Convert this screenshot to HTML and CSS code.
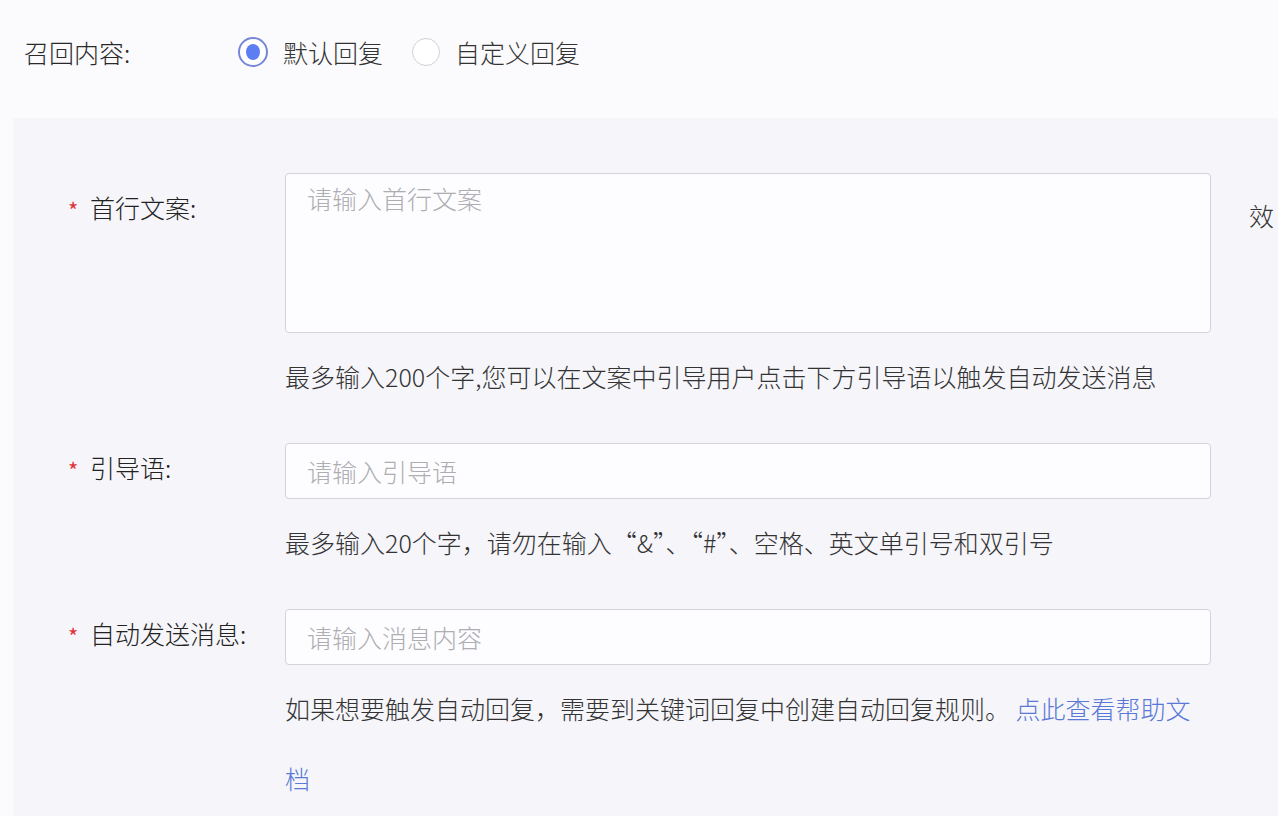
FILE: index.html
```html
<!DOCTYPE html>
<html lang="zh-CN">
<head>
    <meta charset="UTF-8">
    <meta name="viewport" content="width=device-width, initial-scale=1.0">
    <title>召回内容</title>
    <link rel="stylesheet" href="styles.css">
</head>
<body>
    <div class="top-row">
        <div class="top-label">召回内容:</div>
        <div class="radio-group">
            <label class="radio-item">
                <span class="radio checked"></span>
                <span>默认回复</span>
            </label>
            <label class="radio-item">
                <span class="radio"></span>
                <span>自定义回复</span>
            </label>
        </div>
    </div>

    <div class="panel">
        <div class="form-row">
            <div class="form-label tall"><span class="req">*</span>首行文案:</div>
            <div class="form-control">
                <textarea class="textarea" placeholder="请输入首行文案"></textarea>
                <div class="help">最多输入200个字,您可以在文案中引导用户点击下方引导语以触发自动发送消息</div>
            </div>
            <div class="preview-title">效</div>
        </div>

        <div class="form-row">
            <div class="form-label"><span class="req">*</span>引导语:</div>
            <div class="form-control">
                <input class="input" type="text" placeholder="请输入引导语">
                <div class="help">最多输入20个字，请勿在输入“&amp;”、“#”、空格、英文单引号和双引号</div>
            </div>
        </div>

        <div class="form-row">
            <div class="form-label"><span class="req">*</span>自动发送消息:</div>
            <div class="form-control">
                <input class="input" type="text" placeholder="请输入消息内容">
                <div class="help">如果想要触发自动回复，需要到关键词回复中创建自动回复规则。 <a class="link" href="#">点此查看帮助文档</a></div>
            </div>
        </div>
    </div>
</body>
</html>
```

FILE: styles.css
```css
html, body {
    height: 100%;
}
body {
    margin: 0;
    overflow: hidden;
    background: #fbfbfd;
    color: #2a2a2a;
    font-family: "Noto Sans CJK SC", "Noto Sans", sans-serif;
    font-size: 25px;
    font-weight: 300;
}
.top-row {
    display: flex;
    align-items: center;
    height: 48px;
    padding: 28px 0 0 24px;
}
.top-label {
    width: 214px;
    line-height: 48px;
}
.radio-group {
    display: flex;
    align-items: center;
    gap: 29px;
}
.radio-item {
    display: flex;
    align-items: center;
    gap: 15px;
    color: #333;
}
.radio {
    width: 28px;
    height: 28px;
    box-sizing: border-box;
    border: 1px solid #d2d2d6;
    border-radius: 50%;
    background: #fff;
    display: flex;
    align-items: center;
    justify-content: center;
}
.radio.checked {
    width: 30px;
    height: 30px;
    border: 2px solid #7886d8;
}
.radio.checked::after {
    content: "";
    width: 14px;
    height: 16px;
    border-radius: 50%;
    background: #5d7df2;
}
.panel {
    box-sizing: border-box;
    height: 698px;
    margin: 42px 0 0 13px;
    padding: 55px 0 0 55px;
    background: #f5f5fa;
    overflow: hidden;
}
.form-row {
    display: flex;
    align-items: flex-start;
    margin-bottom: 32px;
}
.form-row:last-child {
    margin-bottom: 0;
}
.form-label {
    width: 217px;
    flex-shrink: 0;
    line-height: 48px;
    color: #222;
}
.form-label.tall {
    padding-top: 10px;
}
.req {
    display: inline-block;
    width: 12px;
    margin-right: 10px;
    color: #e0343c;
    font-size: 22px;
    font-weight: 400;
    vertical-align: -1px;
}
.form-control {
    width: 926px;
    flex-shrink: 0;
}
.textarea,
.input {
    display: block;
    width: 100%;
    box-sizing: border-box;
    border: 1px solid #d3d3da;
    border-radius: 4px;
    background: #fdfdff;
    color: #333;
    font-family: inherit;
    font-size: 25px;
    font-weight: 300;
    outline: none;
}
.textarea {
    height: 160px;
    padding: 8px 21px;
    line-height: 32px;
    resize: none;
}
.input {
    height: 56px;
    padding: 0 21px;
}
.textarea::placeholder,
.input::placeholder {
    color: #adadb2;
}
.help {
    margin-top: 8px;
    line-height: 70px;
    color: #333;
}
.link {
    color: #5a78d5;
    text-decoration: none;
}
.preview-title {
    flex-shrink: 0;
    margin: 18px 0 0 38px;
    line-height: 48px;
    white-space: nowrap;
    color: #333;
}
```
